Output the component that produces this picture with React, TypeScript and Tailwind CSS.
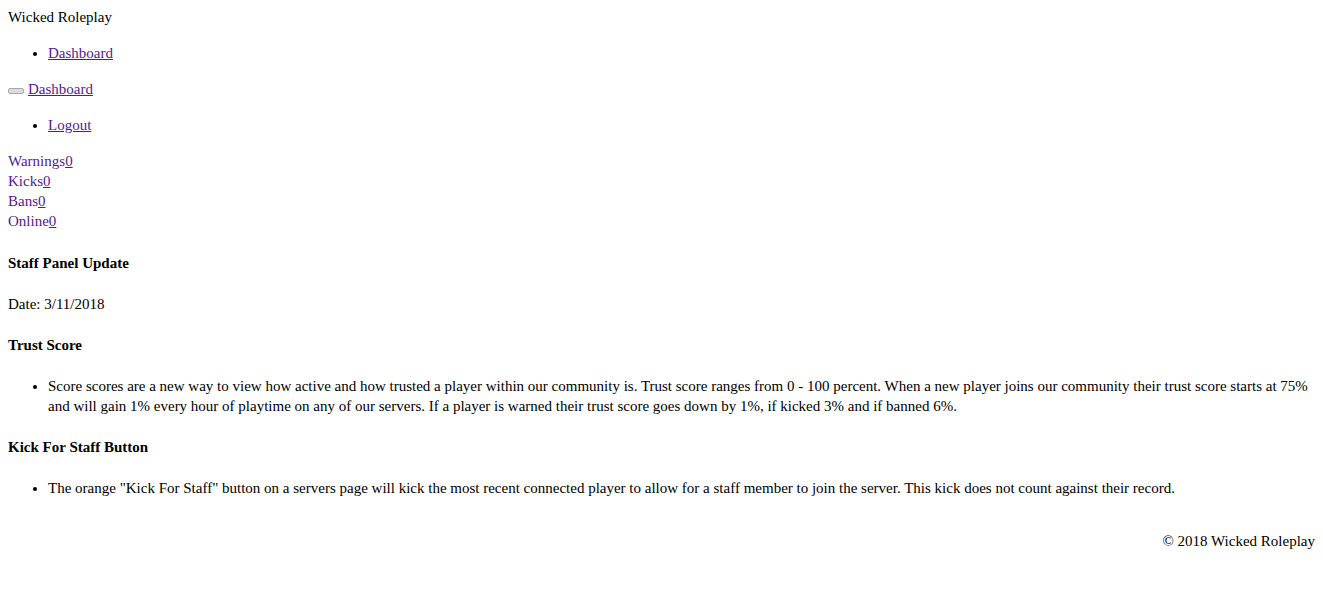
const linkColor = 'text-[#551a8b]'

const stats = [
  { label: 'Warnings', value: 0 },
  { label: 'Kicks', value: 0 },
  { label: 'Bans', value: 0 },
  { label: 'Online', value: 0 },
]

export default function App() {
  return (
    <div className="mx-2 mt-[7px] mb-2 bg-white font-['Liberation_Serif','Times_New_Roman',serif] text-[15px] leading-[20px] text-black">
      <div>Wicked Roleplay</div>

      <ul className="my-4 list-disc pl-10">
        <li>
          <a href="#" className={`${linkColor} underline`}>
            Dashboard
          </a>
        </li>
      </ul>

      <div className="flex items-center">
        <button className="mt-[4px] h-[6px] w-4 rounded-[2px] border border-[#a9a9a9] bg-[#dddddd]" />
        <a href="#" className={`${linkColor} ml-1 underline`}>
          Dashboard
        </a>
      </div>

      <ul className="my-4 list-disc pl-10">
        <li>
          <a href="#" className={`${linkColor} underline`}>
            Logout
          </a>
        </li>
      </ul>

      <div>
        {stats.map((s) => (
          <a key={s.label} href="#" className={`${linkColor} block`}>
            <span>{s.label}</span>
            <span className="underline">{s.value}</span>
          </a>
        ))}
      </div>

      <h4 className="mt-[22px] mb-[21px] font-bold">Staff Panel Update</h4>
      <p className="my-4">Date: 3/11/2018</p>

      <h4 className="my-[21px] font-bold">Trust Score</h4>
      <ul className="my-4 list-disc pl-10">
        <li>
          Score scores are a new way to view how active and how trusted a player within our community is. Trust score
          ranges from 0 - 100 percent. When a new player joins our community their trust score starts at 75% and will
          gain 1% every hour of playtime on any of our servers. If a player is warned their trust score goes down by 1%,
          if kicked 3% and if banned 6%.
        </li>
      </ul>

      <h4 className="my-[21px] font-bold">Kick For Staff Button</h4>
      <ul className="my-4 list-disc pl-10">
        <li>
          The orange "Kick For Staff" button on a servers page will kick the most recent connected player to allow for a
          staff member to join the server. This kick does not count against their record.
        </li>
      </ul>

      <footer className="pt-[17px] text-right">© 2018 Wicked Roleplay</footer>
    </div>
  )
}
